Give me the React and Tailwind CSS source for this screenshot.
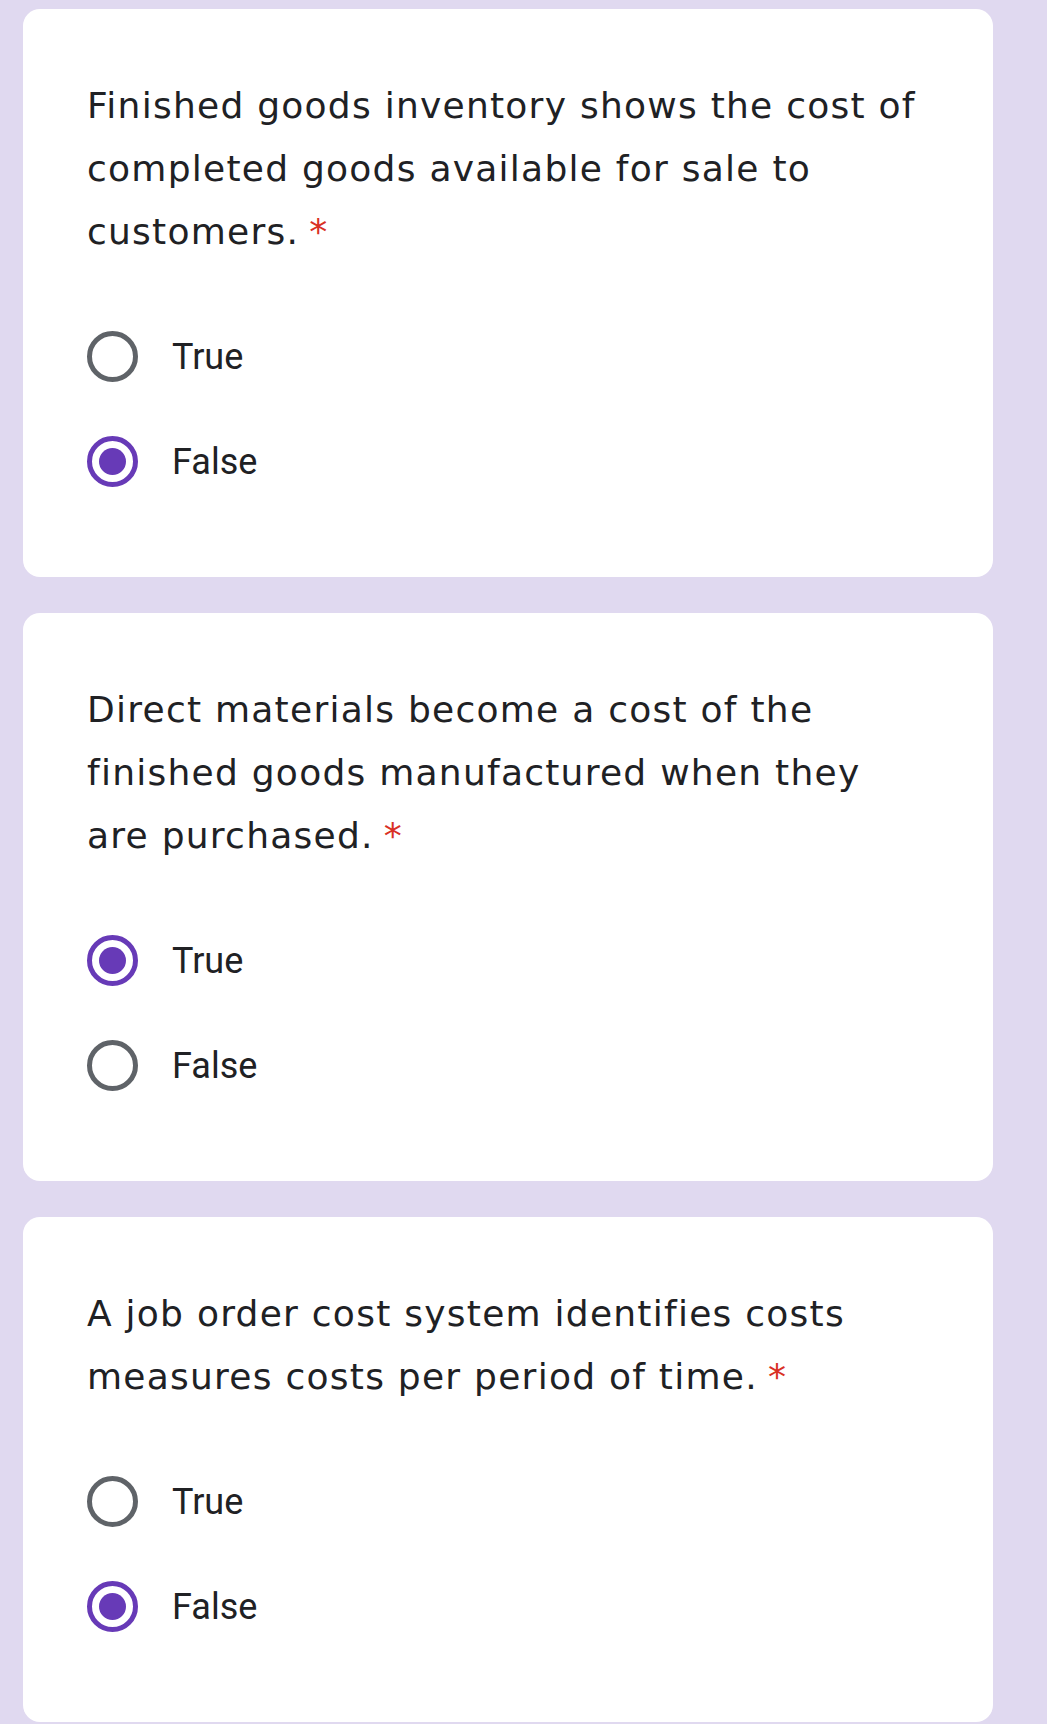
import React from 'react';

const questions = [
    {
        lines: ['Finished goods inventory shows the cost of', 'completed goods available for sale to', 'customers.'],
        answer: 'False'
    },
    {
        lines: ['Direct materials become a cost of the', 'finished goods manufactured when they', 'are purchased.'],
        answer: 'True'
    },
    {
        lines: ['A job order cost system identifies costs', 'measures costs per period of time.'],
        answer: 'False'
    }
];

const Radio = ({ checked }) => (
    <span
        className={`flex items-center justify-center w-[51px] h-[51px] rounded-full border-[5px] shrink-0 ${
            checked ? 'border-[#673ab7]' : 'border-[#5f6368]'
        }`}
    >
        {checked && <span className="w-[27px] h-[27px] rounded-full bg-[#673ab7]" />}
    </span>
);

const QuestionCard = ({ lines, answer }) => (
    <div className="bg-white rounded-[17px] pt-[65px] pb-[63px] pl-[64px] pr-[40px]">
        <div className="text-[36px] leading-[63px] tracking-[1.25px] text-[#202124] font-['DejaVu_Sans',sans-serif]">
            {lines.map((line, i) => (
                <div key={i} className="whitespace-nowrap">
                    {line}
                    {i === lines.length - 1 && <span className="text-[#d93025] pl-[10px]">*</span>}
                </div>
            ))}
        </div>
        <div className="mt-[41px]">
            {['True', 'False'].map(option => (
                <div key={option} className="flex items-center h-[105px]">
                    <Radio checked={option === answer} />
                    <span className="ml-[34px] text-[36px] text-[#202124] font-['Roboto',sans-serif]">{option}</span>
                </div>
            ))}
        </div>
    </div>
);

const App = () => (
    <div className="min-h-[1724px] bg-[#e0d9f0] pt-[9px] pl-[23px] pr-[54px] flex flex-col gap-[36px]">
        {questions.map((q, i) => (
            <QuestionCard key={i} lines={q.lines} answer={q.answer} />
        ))}
    </div>
);

export default App;
